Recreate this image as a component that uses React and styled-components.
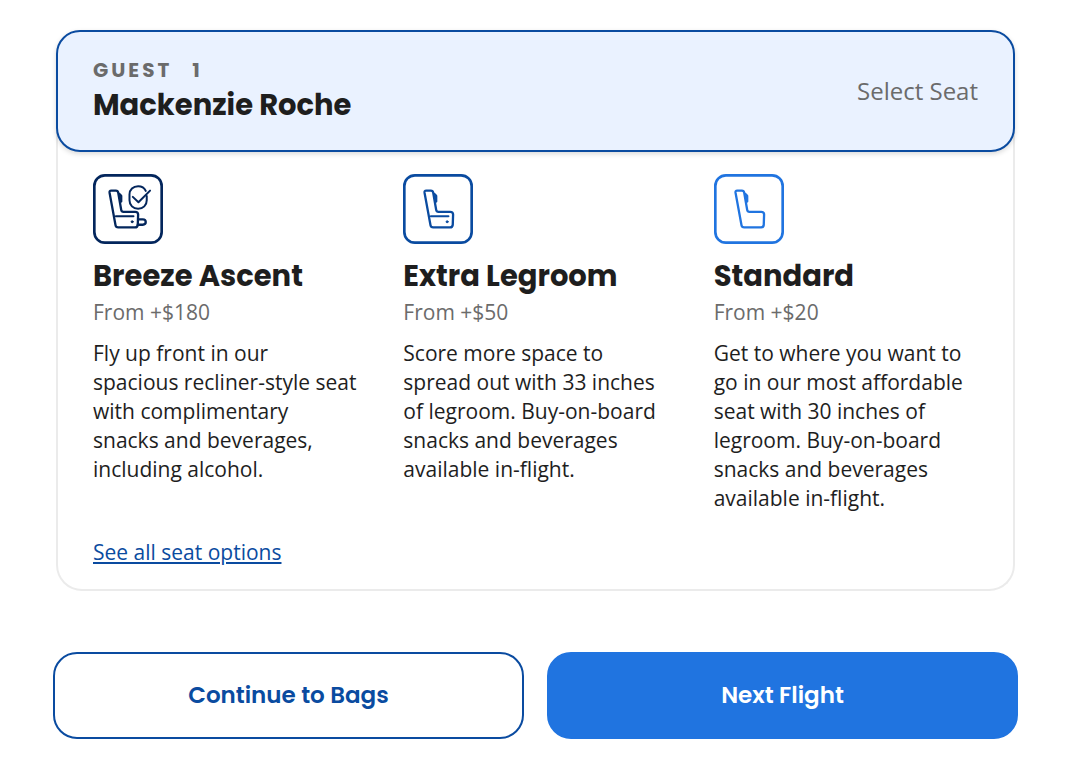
import React from "react";
import styled, { createGlobalStyle } from "styled-components";

const GlobalStyle = createGlobalStyle`
  * {
    box-sizing: border-box;
  }

  body {
    margin: 0;
    background: #fff;
    color: #1e1e1e;
    font-family: "Open Sans", "Noto Sans", sans-serif;
    font-size: 21px;
    line-height: 29px;
  }
`;

const headingFont = `Poppins, Inter, sans-serif`;

const Page = styled.main`
  padding: 30px 62px 24px 53px;
`;

const Card = styled.section`
  margin: 0 3px;
  border: 2px solid #ebebeb;
  border-top: 0;
  border-radius: 26px;
`;

const GuestHeader = styled.header`
  display: flex;
  align-items: center;
  justify-content: space-between;
  margin: 0 -2px;
  padding: 23px 35px 25px;
  border: 2px solid #0a4ba0;
  border-radius: 24px;
  background: #eaf2ff;
  box-shadow: 0 2px 5px rgba(0, 0, 0, 0.15);
`;

const GuestLabel = styled.p`
  display: flex;
  gap: 20px;
  margin: 0;
  color: #6b6b6b;
  font-family: ${headingFont};
  font-size: 20px;
  font-weight: 700;
  line-height: 30px;
  letter-spacing: 3px;
`;

const GuestName = styled.h2`
  margin: 0;
  font-family: ${headingFont};
  font-size: 29px;
  font-weight: 700;
  line-height: 40px;
`;

const SeatStatus = styled.span`
  color: #6b6b6b;
  font-size: 24px;
`;

const Options = styled.div`
  padding: 22px 35px;
`;

const SeatGrid = styled.div`
  display: grid;
  grid-template-columns: repeat(3, 1fr);
  gap: 46px;
`;

const SeatIcon = styled.svg`
  display: block;
  width: 70px;
  height: 70px;
  color: ${props => props.$color};
  fill: none;
  stroke: currentColor;
  stroke-width: 7;
  stroke-linecap: round;
  stroke-linejoin: round;
`;

const SeatTitle = styled.h3`
  margin: 12px 0 0;
  font-family: ${headingFont};
  font-size: 29px;
  font-weight: 700;
  line-height: 40px;
  white-space: nowrap;
`;

const Price = styled.p`
  margin: 2px 0 12px;
  color: #6b6b6b;
`;

const Description = styled.p`
  margin: 0;
`;

const SeatLink = styled.a`
  display: inline-block;
  margin-top: 25px;
  color: #0a4ba0;
  text-decoration: underline;
`;

const Actions = styled.div`
  display: grid;
  grid-template-columns: 1fr 1fr;
  gap: 23px;
  margin-top: 61px;
`;

const Button = styled.button`
  padding: 26px 24px;
  border: 2px solid ${props => (props.$primary ? "#2074e0" : "#0a4ba0")};
  border-radius: 24px;
  background: ${props => (props.$primary ? "#2074e0" : "#fff")};
  color: ${props => (props.$primary ? "#fff" : "#0a4ba0")};
  font-family: ${headingFont};
  font-size: 23px;
  font-weight: 600;
  line-height: 31px;
  cursor: pointer;
`;

const seats = [
  {
    kind: "ascent",
    color: "#03265c",
    title: "Breeze Ascent",
    price: "From +$180",
    text:
      "Fly up front in our spacious recliner-style seat with complimentary snacks and beverages, including alcohol."
  },
  {
    kind: "extra",
    color: "#0a4ba0",
    title: "Extra Legroom",
    price: "From +$50",
    text:
      "Score more space to spread out with 33 inches of legroom. Buy-on-board snacks and beverages available in-flight."
  },
  {
    kind: "standard",
    color: "#2074e0",
    title: "Standard",
    price: "From +$20",
    text:
      "Get to where you want to go in our most affordable seat with 30 inches of legroom. Buy-on-board snacks and beverages available in-flight."
  }
];

const Seat = ({ kind, color }) => (
  <SeatIcon viewBox="0 0 211 211" $color={color} aria-hidden="true">
    <rect x="4" y="4" width="203" height="203" rx="32" strokeWidth="8" />
    <g transform={kind === "ascent" ? "translate(-15 0)" : undefined}>
      <path d="M65 57Q64 50 70 50H84Q90 50 91 56L100 108Q101 114 107 114H142Q151 114 151 122L150 153Q149 161 142 161H91Q84 161 83 155Z" />
      <path d="M94 60L100 66V83" strokeWidth="7" />
      {kind !== "standard" && (
        <>
          <path d="M84 127H137" strokeWidth="6" />
          <circle cx="133" cy="144" r="3" fill="currentColor" strokeWidth="3" />
        </>
      )}
    </g>
    {kind === "ascent" && (
      <>
        <path d="M136 137H150Q159 137 159 145Q159 153 150 153H135" />
        <path
          d="M162 66V79C162 94 151 105 136 105S110 94 110 79V62C110 47 121 37 136 37C146 37 155 42 159 51"
          strokeWidth="6"
        />
        <path d="M120 69L137 85L172 50" strokeWidth="6" />
      </>
    )}
  </SeatIcon>
);

export default class App extends React.Component {
  render() {
    return (
      <Page>
        <GlobalStyle />
        <Card>
          <GuestHeader>
            <div>
              <GuestLabel>
                <span>GUEST</span>
                <span>1</span>
              </GuestLabel>
              <GuestName>Mackenzie Roche</GuestName>
            </div>
            <SeatStatus>Select Seat</SeatStatus>
          </GuestHeader>
          <Options>
            <SeatGrid>
              {seats.map(seat => (
                <article key={seat.kind}>
                  <Seat kind={seat.kind} color={seat.color} />
                  <SeatTitle>{seat.title}</SeatTitle>
                  <Price>{seat.price}</Price>
                  <Description>{seat.text}</Description>
                </article>
              ))}
            </SeatGrid>
            <SeatLink href="#seats">See all seat options</SeatLink>
          </Options>
        </Card>
        <Actions>
          <Button type="button">Continue to Bags</Button>
          <Button type="button" $primary>
            Next Flight
          </Button>
        </Actions>
      </Page>
    );
  }
}
